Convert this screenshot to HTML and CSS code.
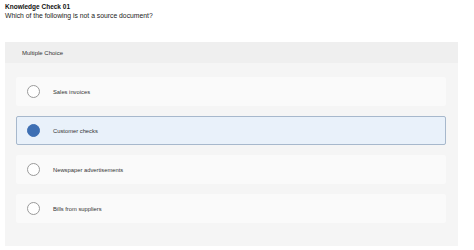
FILE: index.html
```html
<!DOCTYPE html>
<html>
<head>
<meta charset="utf-8">
<link rel="stylesheet" href="styles.css">
</head>
<body>
<div class="intro">
  <div class="title">Knowledge Check 01</div>
  <div class="question">Which of the following is not a source document?</div>
</div>
<div class="panel">
  <div class="panel-head">Multiple Choice</div>
  <div class="options">
    <div class="option"><span class="radio"></span><span class="label">Sales invoices</span></div>
    <div class="option selected"><span class="radio"></span><span class="label">Customer checks</span></div>
    <div class="option"><span class="radio"></span><span class="label">Newspaper advertisements</span></div>
    <div class="option"><span class="radio"></span><span class="label">Bills from suppliers</span></div>
  </div>
</div>
</body>
</html>
```
FILE: styles.css
```css
html, body {
  margin: 0;
  padding: 0;
  background: #ffffff;
}
body {
  font-family: "Liberation Sans", Arial, sans-serif;
  color: #222;
}
.intro {
  padding: 2px 5px 0;
}
.title {
  font-size: 6.5px;
  font-weight: bold;
  line-height: 9px;
  color: #111;
}
.question {
  font-size: 6.8px;
  line-height: 10px;
  color: #222;
}
.panel {
  margin: 21px 0 0 5px;
  width: 453px;
  background: #f5f5f5;
}
.panel-head {
  height: 21px;
  display: flex;
  align-items: center;
  padding-left: 17px;
  background: #efefef;
  font-size: 6px;
  color: #333;
}
.options {
  display: flex;
  flex-direction: column;
  gap: 10px;
  padding: 14px 12px 23px 11px;
}
.option {
  height: 29px;
  box-sizing: border-box;
  display: flex;
  align-items: center;
  padding-left: 10px;
  background: #fafafa;
  border: 1px solid transparent;
  border-radius: 2px;
}
.option.selected {
  background: #e9f1fa;
  border-color: #a7b8cc;
}
.radio {
  width: 13px;
  height: 13px;
  box-sizing: border-box;
  border-radius: 50%;
  border: 1px solid #9a9a9a;
  background: #fff;
  flex: none;
}
.option.selected .radio {
  background: #3e6fb3;
  border-color: #3e6fb3;
}
.label {
  margin-left: 13px;
  font-size: 5.8px;
  color: #333;
}
```
